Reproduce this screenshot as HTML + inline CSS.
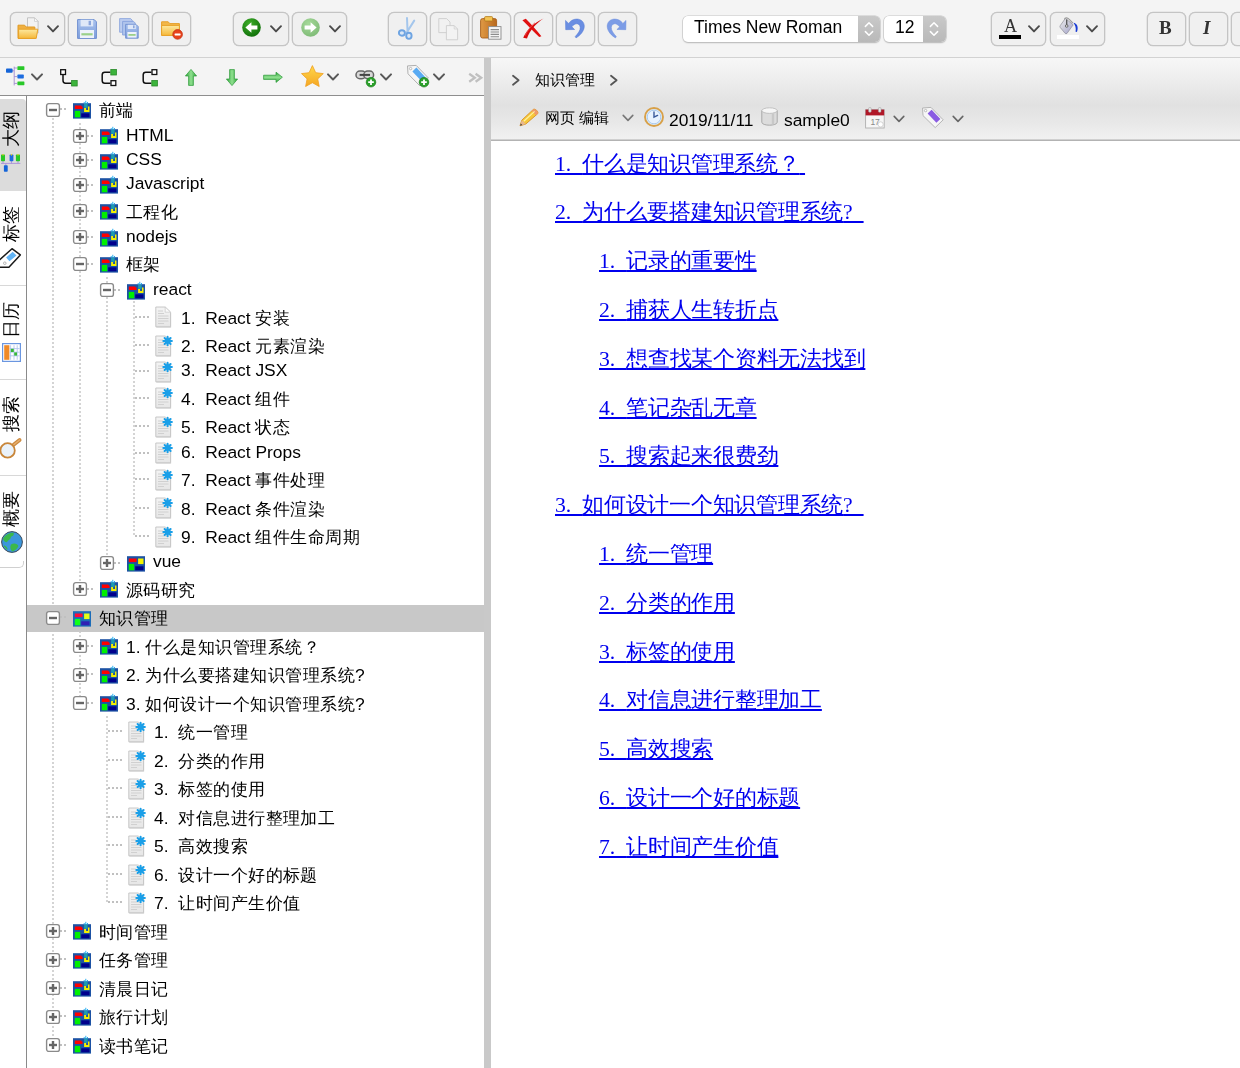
<!DOCTYPE html>
<html lang="zh">
<head>
<meta charset="utf-8">
<title>知识管理</title>
<style>
html,body{margin:0;padding:0}
html{overflow:hidden;width:1240px;height:1068px}
body{width:1240px;height:1068px;position:relative;overflow:hidden;background:#fff;font-family:"Liberation Sans",sans-serif;font-size:17px;color:#000}
svg{position:absolute;overflow:visible}
#tb1{position:absolute;overflow:hidden;left:0;top:0;width:1240px;height:57px;background:#f4f4f4;border-bottom:1px solid #d2d2d2}
.bt{position:absolute;top:12px;height:32px;box-sizing:content-box;border:1px solid #c4c4c4;border-radius:6px;background:#f0f0f0;box-shadow:0 0 0 0.300px #c4c4c4}
#tb2{position:absolute;z-index:2;left:0;top:58px;width:484px;height:37px;background:#f4f4f4;border-bottom:1px solid #8e8e8e}
#split{position:absolute;left:484px;top:58px;width:6.5px;height:1010px;background:#c9c9c9}
#tabs{position:absolute;left:0;top:95px;width:26px;height:973px;z-index:0;background:#fff;border-right:1px solid #8a8a8a}
#tabs .t{position:absolute;left:0;width:26px}
#tabs .on{background:#dcdcdc;border-radius:0 4px 0 0}
#tabs .sp{position:absolute;left:0;width:26px;height:1px;background:#d8d8d8}
#tabs .lb{position:absolute;left:0;width:26px;transform-origin:0 0;white-space:nowrap;font-size:16.5px;line-height:20px}
.vt{position:absolute;transform:rotate(-90deg);transform-origin:0 0;white-space:nowrap;font-size:17.800px;line-height:20px;height:20px}
#tree{position:absolute;left:27px;top:95px;width:457px;height:973px;background:#fff}
#treei{position:absolute;left:-27px;top:-95px;width:484px;height:1068px;overflow:hidden}
.vl{position:absolute;width:2px;background:repeating-linear-gradient(to bottom,#d4d4d4 0,#d4d4d4 2.300px,transparent 2.300px,transparent 4px)}
.hl{position:absolute;height:2px;background:repeating-linear-gradient(to right,#c0c0c0 0,#c0c0c0 2px,transparent 2px,transparent 4.100px)}
.sel{position:absolute;left:27px;width:457px;background:#c8c8c8}
.ex{width:14px;height:14px}
.ic{width:18px;height:22px}
.dc{width:18px;height:23px}
.tx{position:absolute;white-space:nowrap;font-size:17.400px;line-height:40px;height:40px}
#hd{position:absolute;left:490.500px;top:58px;width:749.500px;height:81px;background:linear-gradient(to bottom,#f7f7f7 0,#eeeeee 25%,#e1e1e1 58%,#e8e8e8 80%,#f1f1f1 100%);border-bottom:1px solid #d0d0d0;box-shadow:0 1px 0 #b3b3b3}
#ct{position:absolute;left:490.500px;top:141px;width:749.500px;height:927px;background:#fff}
.lk{position:absolute;white-space:nowrap;font-family:"Liberation Serif",serif;font-size:21.7px;line-height:40px;color:#0000ee;text-decoration:underline;text-decoration-thickness:1.6px;text-underline-offset:2px}
.h{position:absolute;white-space:nowrap}
.tx,.lk,.h,.vt{will-change:transform}
.tx .c{letter-spacing:0.470px}
.lk .c{letter-spacing:-0.250px}
</style>
</head>
<body>
<svg width="0" height="0" style="position:absolute">
<defs>
<linearGradient id="gfold" x1="0" y1="0" x2="0" y2="1"><stop offset="0" stop-color="#fde9a0"/><stop offset="1" stop-color="#f5b83a"/></linearGradient>
<linearGradient id="gdisk" x1="0" y1="0" x2="0" y2="1"><stop offset="0" stop-color="#a9c2ee"/><stop offset="1" stop-color="#7e9fdc"/></linearGradient>
<radialGradient id="ggreen" cx="0.4" cy="0.3" r="0.8"><stop offset="0" stop-color="#3fae2a"/><stop offset="1" stop-color="#0b6a06"/></radialGradient>
<radialGradient id="ggreen2" cx="0.4" cy="0.3" r="0.8"><stop offset="0" stop-color="#a6d99a"/><stop offset="1" stop-color="#7bb873"/></radialGradient>
<linearGradient id="gdoc" x1="0" y1="0" x2="0" y2="1"><stop offset="0" stop-color="#f4f4f4"/><stop offset="1" stop-color="#e6e6e6"/></linearGradient>
<linearGradient id="garr" x1="0" y1="0" x2="1" y2="0"><stop offset="0" stop-color="#2fa33a"/><stop offset="0.5" stop-color="#8fe08f"/><stop offset="1" stop-color="#2fa33a"/></linearGradient>
<linearGradient id="garrh" x1="0" y1="0" x2="0" y2="1"><stop offset="0" stop-color="#2fa33a"/><stop offset="0.5" stop-color="#8fe08f"/><stop offset="1" stop-color="#2fa33a"/></linearGradient>
<linearGradient id="gstar" x1="0" y1="0" x2="0" y2="1"><stop offset="0" stop-color="#ffd84a"/><stop offset="1" stop-color="#f5a623"/></linearGradient>
<linearGradient id="gbuck" x1="0" y1="0" x2="1" y2="1"><stop offset="0" stop-color="#f0f0f0"/><stop offset="0.500" stop-color="#c8c8d8"/><stop offset="1" stop-color="#a0a0d0"/></linearGradient>
<linearGradient id="gclip" x1="0" y1="0" x2="1" y2="0"><stop offset="0" stop-color="#e09a45"/><stop offset="1" stop-color="#b8681c"/></linearGradient>

<!-- expander minus / plus (14x14) -->
<g id="exm"><rect x="0.6" y="0.6" width="12.8" height="12.8" rx="2.2" fill="#fff" stroke="#8a8a8a" stroke-width="1.400"/><rect x="3" y="5.800" width="8" height="2.400" fill="#666"/></g>
<g id="exp"><rect x="0.6" y="0.6" width="12.8" height="12.8" rx="2.2" fill="#fff" stroke="#8a8a8a" stroke-width="1.400"/><rect x="3" y="5.800" width="8" height="2.400" fill="#666"/><rect x="5.800" y="3" width="2.400" height="8" fill="#666"/></g>

<!-- folder icon 18x22, body occupies y 3.5..18.5 -->
<g id="fp"><rect x="0" y="3.200" width="18" height="15.400" fill="#1c52a4"/><rect x="1.800" y="5.500" width="7.800" height="3.600" fill="#ff0000"/><rect x="1.800" y="10.900" width="5.400" height="6.400" fill="#00f000"/><rect x="8.200" y="13.300" width="8.300" height="4" fill="#00008c"/><rect x="11.100" y="5.500" width="5.400" height="5.600" fill="#f4f400"/></g>
<g id="fs"><rect x="0" y="3.200" width="18" height="15.400" fill="#1c6cb8"/><rect x="1.800" y="5.500" width="7.800" height="3.600" fill="#ff0838"/><rect x="1.800" y="10.900" width="5.400" height="6.400" fill="#10ff18"/><rect x="8.200" y="13.300" width="8.300" height="4" fill="#3020b4"/><rect x="11.100" y="5.500" width="5.400" height="5.600" fill="#e4ff18"/></g>
<g id="fo"><rect x="0" y="3.200" width="18" height="15.400" fill="#1c52a4"/><path d="M1.800 5.500h6.200l1.600 1.400v2.200h-7.800z" fill="#ff0000"/><rect x="1.800" y="10.900" width="5.400" height="6.400" fill="#00f000"/><rect x="8.200" y="13.300" width="8.300" height="4" fill="#00008c"/><path d="M11.100 7.900h2v2h1.900v-3.500h1.500v5.500h-5.400z" fill="#f4f000"/><rect x="11.100" y="3.500" width="3.500" height="4.400" fill="#1c9cb0"/><path d="M12.800 0.800v2.600M10.900 2l0.900 1.500M14.800 2l-0.900 1.500" stroke="#2aaef0" stroke-width="1" fill="none"/></g>

<!-- document icons 18x23 -->
<g id="dp"><path d="M1 1.4h9.2l5.6 5.4v14.4h-14.8z" fill="#cfcfcf" opacity="0.55" transform="translate(0.3,0.8)"/><path d="M0.8 1h9.4l5.4 5.2v14.6h-14.8z" fill="url(#gdoc)" stroke="#c2c2c2" stroke-width="0.9"/><path d="M10.2 1v5.2h5.4z" fill="#fafafa" stroke="#c8c8c8" stroke-width="0.7"/><path d="M3 5h5M3 7.5h6M3 10h10.5M3 12.5h10.5M3 15h10.5M3 17.5h6" stroke="#d0d0d0" stroke-width="1"/></g>
<g id="ds"><path d="M1 1.4h14.8v19.8h-14.8z" fill="#cfcfcf" opacity="0.55" transform="translate(0.3,0.8)"/><path d="M0.8 1h9.4l5.4 5.2v14.6h-14.8z" fill="url(#gdoc)" stroke="#c2c2c2" stroke-width="0.9"/><path d="M3 5h5M3 7.5h6M3 10h10.5M3 12.5h10.5M3 15h10.5M3 17.5h6" stroke="#d0d0d0" stroke-width="1"/><g stroke="#1a9fe8" stroke-width="2" stroke-linecap="round"><path d="M12.600 1.700v8.600M8.300 6h8.600M9.600 3l6 6M15.600 3l-6 6"/></g><circle cx="12.600" cy="6" r="2.700" fill="#1a9fe8"/></g>

<!-- chevron down, 11x7 centred on 0,0 -->
<path id="chv" d="M-5 -2.800L0 2.400L5 -2.800" fill="none" stroke="#4a4a4a" stroke-width="1.9" stroke-linecap="round" stroke-linejoin="round"/>
<path id="chs" d="M-5 -2.600L0 2.500L5 -2.600" fill="none" stroke="#585858" stroke-width="2" stroke-linecap="round" stroke-linejoin="round"/>
</defs>
</svg>

<!-- ================= top toolbar ================= -->
<div id="tb1">
<div class="bt" style="left:9.5px;width:53.5px"></div>
<div class="bt" style="left:68px;width:37px"></div>
<div class="bt" style="left:110px;width:37px"></div>
<div class="bt" style="left:152px;width:37px"></div>
<div class="bt" style="left:233px;width:53.5px"></div>
<div class="bt" style="left:291.5px;width:53.5px"></div>
<div class="bt" style="left:388px;width:37px"></div>
<div class="bt" style="left:430px;width:37px"></div>
<div class="bt" style="left:472px;width:37px"></div>
<div class="bt" style="left:514px;width:37px"></div>
<div class="bt" style="left:556px;width:37px"></div>
<div class="bt" style="left:598px;width:37px"></div>
<div class="bt" style="left:991px;width:53px"></div>
<div class="bt" style="left:1049.5px;width:53px"></div>
<div class="bt" style="left:1147px;width:37px"></div>
<div class="bt" style="left:1189px;width:37px"></div>
<div class="bt" style="left:1231px;width:37px"></div>
<!-- open folder + doc -->
<svg style="left:17px;top:17px" width="23" height="23" viewBox="0 0 23 23"><path d="M10.5 0.8h7l3.6 3.6v11.6h-10.6z" fill="#f3f3f3" stroke="#bdbdbd" stroke-width="0.9"/><path d="M17.5 0.8v3.6h3.6z" fill="#fff" stroke="#c4c4c4" stroke-width="0.7"/><path d="M1 8.2h6.6l1.6 1.8h8.6v11.4h-16.8z" fill="#f0b040" stroke="#e09a24" stroke-width="1"/><path d="M1.6 12.2h19.2l-1.6 9.2h-17.6z" fill="url(#gfold)" stroke="#e8a228" stroke-width="1"/></svg>
<svg style="left:52.7px;top:29.3px" width="1" height="1"><use href="#chv"/></svg>
<!-- save -->
<svg style="left:77px;top:19px" width="20" height="20" viewBox="0 0 20 20"><path d="M0.6 0.6h16.6l2.2 2.2v16.6h-18.8z" fill="url(#gdisk)" stroke="#6f8fd0" stroke-width="1"/><rect x="3.6" y="0.8" width="12.6" height="6.6" fill="#dfe8f8"/><rect x="11.6" y="1.8" width="2.4" height="4.4" fill="#8ba6dc"/><rect x="3" y="11" width="14" height="8" fill="#eef2fa"/><rect x="4.4" y="14.2" width="11.2" height="2.2" fill="#9bd08a"/></svg>
<!-- save all -->
<svg style="left:119px;top:18px" width="20" height="21" viewBox="0 0 20 21"><path d="M0.6 0.6h11l1.6 1.6v12h-12.6z" fill="#bccdf0" stroke="#8ea8de" stroke-width="0.9"/><path d="M3.6 3.4h11l1.6 1.6v12h-12.6z" fill="#b0c4ec" stroke="#86a2dc" stroke-width="0.9"/><path d="M6.6 6.4h10.4l2.2 2.2v11.6h-12.6z" fill="url(#gdisk)" stroke="#6f8fd0" stroke-width="0.9"/><rect x="8.8" y="6.8" width="8" height="4.2" fill="#dfe8f8"/><rect x="14" y="7.4" width="1.6" height="2.8" fill="#8ba6dc"/><rect x="8.4" y="14" width="9.2" height="5.6" fill="#eef2fa"/><rect x="9.4" y="16" width="7.2" height="1.8" fill="#9bd08a"/></svg>
<!-- folder remove -->
<svg style="left:161px;top:21px" width="22" height="19" viewBox="0 0 22 19"><path d="M0.6 0.8h6.6l1.6 1.8h9.6v11.6h-17.8z" fill="#f2b84a" stroke="#e6a02a" stroke-width="1"/><path d="M0.6 4.4h17.8v10h-17.8z" fill="url(#gfold)" stroke="#e8a228" stroke-width="1"/><circle cx="16.6" cy="13.4" r="4.8" fill="#e8421c" stroke="#c43010" stroke-width="0.8"/><rect x="13.6" y="12.4" width="6" height="2" rx="0.6" fill="#fff"/></svg>
<!-- back -->
<svg style="left:242px;top:18.3px" width="19" height="19" viewBox="0 0 19 19"><circle cx="9.5" cy="9.5" r="9.3" fill="url(#ggreen)"/><path d="M3.4 9.5l6-5.2v3.2h6v4h-6v3.2z" fill="#fff"/></svg>
<svg style="left:276.3px;top:29.3px" width="1" height="1"><use href="#chv"/></svg>
<!-- forward -->
<svg style="left:300.6px;top:18.3px" width="19" height="19" viewBox="0 0 19 19"><circle cx="9.5" cy="9.5" r="9.3" fill="url(#ggreen2)"/><path d="M15.6 9.5l-6-5.2v3.2h-6v4h6v3.2z" fill="#fff"/></svg>
<svg style="left:334.6px;top:29.3px" width="1" height="1"><use href="#chv"/></svg>
<!-- cut -->
<svg style="left:398px;top:17px" width="18" height="24" viewBox="0 0 18 24"><path d="M9 1L9.600 15.600M16.200 3.600L8.400 16" stroke="#a4c6ec" stroke-width="2" stroke-linecap="round" fill="none"/><ellipse cx="3.900" cy="16" rx="3" ry="2.700" fill="#dce8f6" stroke="#6ea4e2" stroke-width="1.900"/><ellipse cx="10.900" cy="18.800" rx="2.700" ry="3.100" fill="#dce8f6" stroke="#6ea4e2" stroke-width="1.900"/></svg>
<!-- copy (disabled) -->
<svg style="left:438px;top:18px" width="22" height="23" viewBox="0 0 22 23"><path d="M0.8 0.6h7.8l3.4 3.4v10.6h-11.2z" fill="#f1f1f1" stroke="#cdcdcd" stroke-width="0.9"/><path d="M8.4 7.6h7.8l3.4 3.4v10.8h-11.2z" fill="#f3f3f3" stroke="#cdcdcd" stroke-width="0.9"/><path d="M16.2 7.6v3.4h3.4" fill="none" stroke="#d2d2d2" stroke-width="0.8"/></svg>
<!-- paste -->
<svg style="left:480px;top:15.800px" width="22" height="24" viewBox="0 0 22 24"><rect x="0.6" y="2.6" width="16" height="19.4" rx="2" fill="url(#gclip)" stroke="#a85e18" stroke-width="0.9"/><rect x="4.6" y="0.6" width="8" height="4.4" rx="1" fill="#f4c454" stroke="#b07a1c" stroke-width="0.8"/><rect x="8.6" y="10.6" width="12.4" height="12.6" fill="#f4f4f4" stroke="#8a8a8a" stroke-width="0.9"/><path d="M10.6 13.6h8.4M10.6 16h8.4M10.6 18.4h8.4M10.6 20.8h8.4" stroke="#8c8c8c" stroke-width="1.1"/></svg>
<!-- delete -->
<svg style="left:522px;top:18px" width="22" height="21" viewBox="0 0 22 21"><path d="M0.400 2.200L3.800 0.800C8.800 5.800 14.800 12.400 19.400 18.200L17.200 19C12.400 14 6 8 0.400 2.200Z" fill="#e01010"/><path d="M21.600 0.600C14.400 5 7.400 13 5 20.600L1.200 19.800C4.400 12.400 12 4.600 21.600 0.600Z" fill="#d80c0c"/><path d="M3 17.800C5 13 9 8 13 4.800" stroke="#f04848" stroke-width="0.900" fill="none"/></svg>
<!-- undo -->
<svg style="left:564.500px;top:18px" width="21" height="22" viewBox="0 0 21 22"><path d="M0.500 2.400L3.600 5.400C6 2 10 0.600 13.400 1.200C17.600 2 19.800 5.600 19.200 9.400C18.600 13.600 15 17.600 11 19.900L10.200 18.600C13 15.400 15.400 12.400 15.200 9.400C15 6.600 12.800 5.400 11 5.800C9.400 6.200 8 7.400 6.800 8.800L9.600 11.500L0.700 11.700Z" fill="#6a8ee2" stroke="#5078d4" stroke-width="0.500"/></svg>
<!-- redo -->
<svg style="left:606px;top:18px" width="21" height="22" viewBox="0 0 21 22"><g transform="translate(20.500,0) scale(-1,1)"><path d="M0.500 2.400L3.600 5.400C6 2 10 0.600 13.400 1.200C17.600 2 19.800 5.600 19.200 9.400C18.600 13.600 15 17.600 11 19.900L10.200 18.600C13 15.400 15.400 12.400 15.200 9.400C15 6.600 12.800 5.400 11 5.800C9.400 6.200 8 7.400 6.800 8.800L9.600 11.500L0.700 11.700Z" fill="#7c9ce6" stroke="#6a8cdc" stroke-width="0.500"/></g></svg>
<!-- font combo -->
<div class="h" style="left:682.5px;top:15.5px;width:197px;height:26px;border-radius:5px;background:#fff;box-shadow:0 0 0 0.6px #c4c4c4,0 1px 1.5px rgba(0,0,0,.28)"></div>
<div class="h" style="left:858px;top:15.5px;width:21.5px;height:26px;border-radius:0 5px 5px 0;background:linear-gradient(#c9c9c9,#b9b9b9)"></div>
<svg style="left:868.7px;top:28.5px" width="1" height="1"><path d="M-3.6 -2.6L0 -6.2L3.6 -2.6M-3.6 2.6L0 6.2L3.6 2.6" fill="none" stroke="#fff" stroke-width="1.5" stroke-linecap="round" stroke-linejoin="round"/></svg>
<span class="h" style="left:694px;top:7px;font-size:17.500px;line-height:40px">Times New Roman</span>
<!-- size combo -->
<div class="h" style="left:884px;top:15.5px;width:61.5px;height:26px;border-radius:5px;background:#fff;box-shadow:0 0 0 0.6px #c4c4c4,0 1px 1.5px rgba(0,0,0,.28)"></div>
<div class="h" style="left:923px;top:15.5px;width:22.5px;height:26px;border-radius:0 5px 5px 0;background:linear-gradient(#c9c9c9,#b9b9b9)"></div>
<svg style="left:934.3px;top:28.5px" width="1" height="1"><path d="M-3.6 -2.6L0 -6.2L3.6 -2.6M-3.6 2.6L0 6.2L3.6 2.6" fill="none" stroke="#fff" stroke-width="1.5" stroke-linecap="round" stroke-linejoin="round"/></svg>
<span class="h" style="left:894.800px;top:7px;font-size:17.500px;line-height:40px">12</span>
<!-- font colour -->
<span class="h" style="left:1003.600px;top:5.600px;font-family:'Liberation Serif',serif;font-size:18.200px;line-height:40px;color:#333">A</span>
<div class="h" style="left:999px;top:35px;width:22px;height:4px;background:#000"></div>
<svg style="left:1033.7px;top:29.3px" width="1" height="1"><use href="#chv"/></svg>
<!-- fill colour -->
<svg style="left:1059px;top:17px" width="20" height="18" viewBox="0 0 20 18"><path d="M6.400 1.400L14.200 7.800L8 16.400Q7 17 6 16.200L1.200 10.400Q0.600 9.400 1.400 8.400Z" fill="url(#gbuck)" stroke="#8c8c98" stroke-width="0.700"/><path d="M5.400 2.400C6 0.200 8.600 0.600 10 2.200L13.800 6" fill="none" stroke="#9a9a9a" stroke-width="1.100"/><path d="M7.700 2.600v6" stroke="#555" stroke-width="1.300"/><circle cx="7.700" cy="9" r="1.300" fill="#ddd" stroke="#555" stroke-width="0.800"/><path d="M14.400 5.800C18 6.400 19.600 10 18.200 14.200C17.800 15.200 17 15.200 16.600 14.400C17.200 11 16.400 8.400 14.400 5.800Z" fill="#1a3cd4"/></svg>
<div class="h" style="left:1057px;top:35px;width:22px;height:4px;background:#fff"></div>
<svg style="left:1091.7px;top:29.3px" width="1" height="1"><use href="#chv"/></svg>
<!-- B I -->
<span class="h" style="left:1159px;top:8.200px;font-family:'Liberation Serif',serif;font-weight:bold;font-size:19px;line-height:40px;color:#333">B</span>
<span class="h" style="left:1203.400px;top:8.200px;font-family:'Liberation Serif',serif;font-weight:bold;font-style:italic;font-size:19px;line-height:40px;color:#333">I</span>

</div>

<!-- ================= left toolbar ================= -->
<div id="tb2">
<!-- tree icon (coords relative to tb2 top = 58) -->
<svg style="left:5.5px;top:8.3px" width="19" height="20" viewBox="0 0 19 20"><path d="M8.2 0.6v18.8M6 4.800h2.200M8.200 2h3M8.200 10.600h3M8.200 17.400h3" stroke="#a08ad0" stroke-width="0.9" fill="none"/><rect x="0" y="2.600" width="6.600" height="4.200" rx="0.800" fill="#1464d8"/><rect x="11.400" y="0.200" width="7" height="3.800" rx="0.600" fill="#28c828"/><rect x="11.400" y="8.600" width="6.400" height="3.800" rx="0.600" fill="#1c6ce0"/><rect x="11.400" y="15.400" width="7" height="3.800" rx="0.600" fill="#28c828"/></svg>
<svg style="left:36.6px;top:18.6px" width="1" height="1"><use href="#chs"/></svg>
<!-- icon 2 -->
<svg style="left:59.5px;top:11px" width="18" height="18" viewBox="0 0 18 18"><path d="M3 6v5.600q0 2.600 2.600 2.600h6" fill="none" stroke="#111" stroke-width="1.5"/><rect x="0.700" y="0.700" width="4.800" height="4.800" fill="#fff" stroke="#111" stroke-width="1.300"/><rect x="11.600" y="11.400" width="5.600" height="5.600" fill="#3cb43c" stroke="#2a8a2a" stroke-width="0.800"/></svg>
<!-- icon 3 -->
<svg style="left:101px;top:11px" width="16" height="18" viewBox="0 0 16 18"><path d="M9.400 3.200h-5.600q-2.600 0-2.600 2.600v5.600q0 2.800 2.600 2.800h5.600" fill="none" stroke="#111" stroke-width="1.500"/><rect x="9.800" y="0.400" width="5.600" height="5.600" fill="#3cb43c" stroke="#2a8a2a" stroke-width="0.800"/><rect x="10" y="11.700" width="4.800" height="4.800" fill="#fff" stroke="#111" stroke-width="1.300"/></svg>
<!-- icon 4 -->
<svg style="left:141.600px;top:11px" width="16" height="18" viewBox="0 0 16 18"><path d="M9.400 3.200h-5.600q-2.600 0-2.600 2.600v5.600q0 2.800 2.600 2.800h5.600" fill="none" stroke="#111" stroke-width="1.500"/><rect x="10" y="0.700" width="4.800" height="4.800" fill="#fff" stroke="#111" stroke-width="1.300"/><rect x="9.800" y="11.400" width="5.600" height="5.600" fill="#3cb43c" stroke="#2a8a2a" stroke-width="0.800"/></svg>
<!-- up -->
<svg style="left:185px;top:11px" width="12" height="17" viewBox="0 0 12 17"><path d="M6 0.400l5.600 6.600h-3.200v9.400h-4.800v-9.400h-3.200z" fill="url(#garr)" stroke="#2a9a36" stroke-width="0.700"/></svg>
<!-- down -->
<svg style="left:225.500px;top:11px" width="12" height="17" viewBox="0 0 12 17"><path d="M6 16.600l5.600-6.600h-3.200v-9.400h-4.800v9.400h-3.200z" fill="url(#garr)" stroke="#2a9a36" stroke-width="0.700"/></svg>
<!-- right -->
<svg style="left:263px;top:14px" width="20" height="11" viewBox="0 0 20 11"><path d="M19.400 5.200l-6.400-5v3h-12.400v4.200h12.400v3z" fill="url(#garrh)" stroke="#2a9a36" stroke-width="0.700"/></svg>
<!-- star -->
<svg style="left:300.500px;top:7.300px" width="23" height="22" viewBox="0 0 23 22"><path d="M11.400 0.600l3.300 7.100 7.600 0.900-5.600 5.300 1.500 7.600-6.800-3.800-6.800 3.800 1.500-7.600-5.600-5.300 7.600-0.900z" fill="url(#gstar)" stroke="#f0a020" stroke-width="0.800" stroke-linejoin="round"/></svg>
<svg style="left:333.400px;top:18.600px" width="1" height="1"><use href="#chs"/></svg>
<!-- link + -->
<svg style="left:354.500px;top:12px" width="21" height="18" viewBox="0 0 21 18"><rect x="1" y="1.100" width="9.800" height="7.600" rx="3.800" fill="#d8d8d8" stroke="#666" stroke-width="1.500"/><rect x="8.800" y="1.100" width="9.800" height="7.600" rx="3.800" fill="#d8d8d8" stroke="#666" stroke-width="1.500"/><rect x="4.600" y="3.900" width="10.400" height="2" fill="#444"/><circle cx="16" cy="12.200" r="4.800" fill="#2aa02a" stroke="#1c801c" stroke-width="0.700"/><path d="M16 9.400v5.600M13.200 12.200h5.600" stroke="#fff" stroke-width="1.800"/></svg>
<svg style="left:386.300px;top:18.600px" width="1" height="1"><use href="#chs"/></svg>
<!-- tag + -->
<svg style="left:406.500px;top:7px" width="23" height="22" viewBox="0 0 23 22"><path d="M0.500 0.900L9.200 0.400L21.400 13L13 21L1 8.800Z" fill="#f6f6f6" stroke="#b0b0b0" stroke-width="1" stroke-linejoin="round"/><path d="M5.400 6.400L9.400 2.600L18.400 12.200L14.400 16Z" fill="#58aaf2"/><circle cx="3.600" cy="3.600" r="1.200" fill="#fff" stroke="#999" stroke-width="0.600"/><circle cx="17" cy="17.200" r="4.800" fill="#2aa02a" stroke="#1c801c" stroke-width="0.700"/><path d="M17 14.400v5.600M14.200 17.200h5.600" stroke="#fff" stroke-width="1.800"/></svg>
<svg style="left:439.300px;top:18.600px" width="1" height="1"><use href="#chs"/></svg>
<!-- >> -->
<svg style="left:467.600px;top:15.200px" width="15" height="10" viewBox="0 0 15 10"><path d="M1.200 0.800l5.600 4-5.600 4M7.600 0.800l5.600 4-5.600 4" fill="none" stroke="#c0c0c0" stroke-width="2.300"/></svg>

</div>

<div id="split"></div>

<!-- ================= vertical tabs ================= -->
<div id="tabs">
<!-- coords relative to #tabs top = 95 -->
<div class="t on" style="top:4.300px;height:91.500px"></div>
<div class="sp" style="top:189.500px"></div>
<div class="sp" style="top:284px"></div>
<div class="sp" style="top:379.700px"></div>
<div class="t" style="top:471px;height:0;width:23px;border-bottom:1px solid #d0d0d0;border-right:1px solid #d0d0d0;border-radius:0 0 5px 0;height:6px;top:466px"></div>
<span class="vt" style="left:0.700px;top:52px">大纲</span>
<span class="vt" style="left:0.700px;top:147px">标签</span>
<span class="vt" style="left:0.700px;top:242.500px">日历</span>
<span class="vt" style="left:0.700px;top:337px">搜索</span>
<span class="vt" style="left:0.700px;top:431.500px">概要</span>
<!-- outline icon -->
<svg style="left:1.300px;top:59px" width="20" height="18" viewBox="0 0 20 18"><path d="M0 9.400h19.400M4.800 9.400v2.400M2 7v2.400M10.500 7v2.400M17 7v2.400" stroke="#a890d8" stroke-width="0.900" fill="none"/><rect x="0" y="0.500" width="4" height="6.700" rx="0.700" fill="#28c828"/><rect x="8.600" y="0.500" width="3.800" height="6.700" rx="0.700" fill="#1c6ce0"/><rect x="14.900" y="0.500" width="4.100" height="6.700" rx="0.700" fill="#28c828"/><rect x="2.900" y="11.300" width="3.800" height="6.500" rx="0.700" fill="#1464d8"/><path d="M2 0v1.400M10.500 0v1.400M17 0v1.400" stroke="#e8d020" stroke-width="1.200"/></svg>
<!-- tag icon -->
<svg style="left:0px;top:153.200px" width="22" height="21" viewBox="0 0 22 21"><path d="M-1 12.400L12 0.700L20.300 6.900L8.900 19.300L-1 19.300Z" fill="#fff" stroke="#1a1a1a" stroke-width="1.500" stroke-linejoin="round"/><path d="M6.100 9.500L12.700 3.800L16.500 7.600L9.500 13.300Z" fill="#62b4f6"/><circle cx="4.800" cy="15.200" r="1.300" fill="#fff" stroke="#999" stroke-width="0.700"/></svg>
<!-- calendar icon -->
<svg style="left:1.500px;top:248px" width="19" height="19" viewBox="0 0 19 19"><rect x="0.600" y="0.600" width="17.800" height="17.800" fill="#fff" stroke="#6a96e0" stroke-width="1.200"/><rect x="2.200" y="2.200" width="5.200" height="14.600" fill="#f08a28"/><path d="M8.600 2.200v14.600M12 2.200v14.600M15.200 2.200v14.600M7.600 5.600h10M7.600 9.200h10M7.600 12.800h10" stroke="#a8c0ea" stroke-width="0.800"/><rect x="8.800" y="5.800" width="3" height="3.200" fill="#38b838"/><rect x="12.200" y="9.400" width="2.800" height="3.200" fill="#38b838"/></svg>
<!-- search icon -->
<svg style="left:0px;top:343px" width="23" height="21" viewBox="0 0 23 21"><path d="M13.600 6.800l6-4.800" stroke="#cc8a40" stroke-width="3.800" stroke-linecap="round"/><path d="M13.600 6.800l6-4.800" stroke="#e8b070" stroke-width="1.400" stroke-linecap="round"/><circle cx="7.600" cy="12.400" r="7.200" fill="#eaf2fa" stroke="#c8863a" stroke-width="1.800"/></svg>
<!-- globe icon -->
<svg style="left:0.500px;top:436px" width="22" height="22" viewBox="0 0 22 22"><circle cx="11" cy="11" r="10.400" fill="#3c96dc" stroke="#3a4a5a" stroke-width="1"/><path d="M2 8c2-4 6-6.400 10.400-6.200 1.200 1.600-0.400 3.400-2.600 4 0.400 2.200-2 3-3.400 4.800-1 1.400-2.800 0.400-4.400-2.600z" fill="#3cb84a"/><path d="M10 13.400c2.600-1.800 6.600-1 7.400 1.600-0.800 2.600-3.600 4.800-6.400 5.400-1.600-2-2.400-4.800-1-7z" fill="#3cb84a"/><path d="M3 15c1.400 0.400 2.600 1.600 3 3.400" stroke="#3cb84a" stroke-width="1.600" fill="none"/></svg>

</div>

<!-- ================= tree ================= -->
<div id="tree"><div id="treei">
<i class="vl" style="left:79px;top:122.8px;height:466.2px"></i>
<i class="vl" style="left:106px;top:277.0px;height:285.6px"></i>
<i class="vl" style="left:133px;top:301.3px;height:234.9px"></i>
<i class="vl" style="left:79px;top:630.7px;height:72.2px"></i>
<i class="vl" style="left:106px;top:716.2px;height:186.2px"></i>
<i class="vl" style="left:52px;top:109.5px;height:935.5px"></i>
<i class="hl" style="left:60.0px;top:108px;width:7px"></i>
<svg class="ex" style="left:46.0px;top:102.5px"><use href="#exm"/></svg>
<svg class="ic" style="left:73.0px;top:99.9px"><use href="#fo"/></svg>
<span class="tx" style="left:99.0px;top:90px"><span class="c">前端</span></span>
<i class="hl" style="left:87.0px;top:135px;width:7px"></i>
<svg class="ex" style="left:73.0px;top:128.9px"><use href="#exp"/></svg>
<svg class="ic" style="left:100.0px;top:126.3px"><use href="#fo"/></svg>
<span class="tx" style="left:126.0px;top:115px">HTML</span>
<i class="hl" style="left:87.0px;top:159px;width:7px"></i>
<svg class="ex" style="left:73.0px;top:153.2px"><use href="#exp"/></svg>
<svg class="ic" style="left:100.0px;top:150.6px"><use href="#fo"/></svg>
<span class="tx" style="left:126.0px;top:139px">CSS</span>
<i class="hl" style="left:87.0px;top:184px;width:7px"></i>
<svg class="ex" style="left:73.0px;top:177.5px"><use href="#exp"/></svg>
<svg class="ic" style="left:100.0px;top:174.9px"><use href="#fo"/></svg>
<span class="tx" style="left:126.0px;top:163px">Javascript</span>
<i class="hl" style="left:87.0px;top:210px;width:7px"></i>
<svg class="ex" style="left:73.0px;top:203.9px"><use href="#exp"/></svg>
<svg class="ic" style="left:100.0px;top:201.3px"><use href="#fo"/></svg>
<span class="tx" style="left:126.0px;top:192px"><span class="c">工程化</span></span>
<i class="hl" style="left:87.0px;top:236px;width:7px"></i>
<svg class="ex" style="left:73.0px;top:230.3px"><use href="#exp"/></svg>
<svg class="ic" style="left:100.0px;top:227.7px"><use href="#fo"/></svg>
<span class="tx" style="left:126.0px;top:216px">nodejs</span>
<i class="hl" style="left:87.0px;top:263px;width:7px"></i>
<svg class="ex" style="left:73.0px;top:256.7px"><use href="#exm"/></svg>
<svg class="ic" style="left:100.0px;top:254.1px"><use href="#fo"/></svg>
<span class="tx" style="left:126.0px;top:244px"><span class="c">框架</span></span>
<i class="hl" style="left:114.0px;top:289px;width:7px"></i>
<svg class="ex" style="left:100.0px;top:283.1px"><use href="#exm"/></svg>
<svg class="ic" style="left:127.0px;top:280.5px"><use href="#fo"/></svg>
<span class="tx" style="left:153.0px;top:269px">react</span>
<i class="hl" style="left:135.0px;top:316px;width:14px"></i>
<svg class="dc" style="left:155.2px;top:306.1px"><use href="#dp"/></svg>
<span class="tx" style="left:181.0px;top:298px">1.&nbsp; React <span class="c">安装</span></span>
<i class="hl" style="left:135.0px;top:344px;width:14px"></i>
<svg class="dc" style="left:155.2px;top:334.6px"><use href="#ds"/></svg>
<span class="tx" style="left:181.0px;top:326px">2.&nbsp; React <span class="c">元素渲染</span></span>
<i class="hl" style="left:135.0px;top:370px;width:14px"></i>
<svg class="dc" style="left:155.2px;top:361.0px"><use href="#ds"/></svg>
<span class="tx" style="left:181.0px;top:350px">3.&nbsp; React JSX</span>
<i class="hl" style="left:135.0px;top:397px;width:14px"></i>
<svg class="dc" style="left:155.2px;top:387.4px"><use href="#ds"/></svg>
<span class="tx" style="left:181.0px;top:379px">4.&nbsp; React <span class="c">组件</span></span>
<i class="hl" style="left:135.0px;top:425px;width:14px"></i>
<svg class="dc" style="left:155.2px;top:415.9px"><use href="#ds"/></svg>
<span class="tx" style="left:181.0px;top:407px">5.&nbsp; React <span class="c">状态</span></span>
<i class="hl" style="left:135.0px;top:452px;width:14px"></i>
<svg class="dc" style="left:155.2px;top:442.3px"><use href="#ds"/></svg>
<span class="tx" style="left:181.0px;top:432px">6.&nbsp; React Props</span>
<i class="hl" style="left:135.0px;top:478px;width:14px"></i>
<svg class="dc" style="left:155.2px;top:468.7px"><use href="#ds"/></svg>
<span class="tx" style="left:181.0px;top:460px">7.&nbsp; React <span class="c">事件处理</span></span>
<i class="hl" style="left:135.0px;top:507px;width:14px"></i>
<svg class="dc" style="left:155.2px;top:497.2px"><use href="#ds"/></svg>
<span class="tx" style="left:181.0px;top:489px">8.&nbsp; React <span class="c">条件渲染</span></span>
<i class="hl" style="left:135.0px;top:535px;width:14px"></i>
<svg class="dc" style="left:155.2px;top:525.7px"><use href="#ds"/></svg>
<span class="tx" style="left:181.0px;top:517px">9.&nbsp; React <span class="c">组件生命周期</span></span>
<i class="hl" style="left:114.0px;top:562px;width:7px"></i>
<svg class="ex" style="left:100.0px;top:555.6px"><use href="#exp"/></svg>
<svg class="ic" style="left:127.0px;top:553.0px"><use href="#fp"/></svg>
<span class="tx" style="left:153.0px;top:541px">vue</span>
<i class="hl" style="left:87.0px;top:588px;width:7px"></i>
<svg class="ex" style="left:73.0px;top:582.0px"><use href="#exp"/></svg>
<svg class="ic" style="left:100.0px;top:579.4px"><use href="#fo"/></svg>
<span class="tx" style="left:126.0px;top:570px"><span class="c">源码研究</span></span>
<div class="sel" style="top:604.6px;height:27.9px"></div>
<i class="hl" style="left:60.0px;top:616px;width:7px"></i>
<svg class="ex" style="left:46.0px;top:610.5px"><use href="#exm"/></svg>
<svg class="ic" style="left:73.0px;top:607.9px"><use href="#fs"/></svg>
<span class="tx" style="left:99.0px;top:598px"><span class="c">知识管理</span></span>
<i class="hl" style="left:87.0px;top:645px;width:7px"></i>
<svg class="ex" style="left:73.0px;top:639.0px"><use href="#exp"/></svg>
<svg class="ic" style="left:100.0px;top:636.4px"><use href="#fo"/></svg>
<span class="tx" style="left:126.0px;top:627px">1. <span class="c">什么是知识管理系统？</span></span>
<i class="hl" style="left:87.0px;top:673px;width:7px"></i>
<svg class="ex" style="left:73.0px;top:667.5px"><use href="#exp"/></svg>
<svg class="ic" style="left:100.0px;top:664.9px"><use href="#fo"/></svg>
<span class="tx" style="left:126.0px;top:655px">2. <span class="c">为什么要搭建知识管理系统</span>?</span>
<i class="hl" style="left:87.0px;top:702px;width:7px"></i>
<svg class="ex" style="left:73.0px;top:696.0px"><use href="#exm"/></svg>
<svg class="ic" style="left:100.0px;top:693.4px"><use href="#fo"/></svg>
<span class="tx" style="left:126.0px;top:684px">3. <span class="c">如何设计一个知识管理系统</span>?</span>
<i class="hl" style="left:108.0px;top:730px;width:14px"></i>
<svg class="dc" style="left:128.2px;top:721.0px"><use href="#ds"/></svg>
<span class="tx" style="left:154.0px;top:712px">1.&nbsp; <span class="c">统一管理</span></span>
<i class="hl" style="left:108.0px;top:759px;width:14px"></i>
<svg class="dc" style="left:128.2px;top:749.5px"><use href="#ds"/></svg>
<span class="tx" style="left:154.0px;top:741px">2.&nbsp; <span class="c">分类的作用</span></span>
<i class="hl" style="left:108.0px;top:787px;width:14px"></i>
<svg class="dc" style="left:128.2px;top:778.0px"><use href="#ds"/></svg>
<span class="tx" style="left:154.0px;top:769px">3.&nbsp; <span class="c">标签的使用</span></span>
<i class="hl" style="left:108.0px;top:816px;width:14px"></i>
<svg class="dc" style="left:128.2px;top:806.5px"><use href="#ds"/></svg>
<span class="tx" style="left:154.0px;top:798px">4.&nbsp; <span class="c">对信息进行整理加工</span></span>
<i class="hl" style="left:108.0px;top:844px;width:14px"></i>
<svg class="dc" style="left:128.2px;top:835.0px"><use href="#ds"/></svg>
<span class="tx" style="left:154.0px;top:826px">5.&nbsp; <span class="c">高效搜索</span></span>
<i class="hl" style="left:108.0px;top:873px;width:14px"></i>
<svg class="dc" style="left:128.2px;top:863.5px"><use href="#ds"/></svg>
<span class="tx" style="left:154.0px;top:855px">6.&nbsp; <span class="c">设计一个好的标题</span></span>
<i class="hl" style="left:108.0px;top:901px;width:14px"></i>
<svg class="dc" style="left:128.2px;top:892.0px"><use href="#ds"/></svg>
<span class="tx" style="left:154.0px;top:883px">7.&nbsp; <span class="c">让时间产生价值</span></span>
<i class="hl" style="left:60.0px;top:930px;width:7px"></i>
<svg class="ex" style="left:46.0px;top:924.0px"><use href="#exp"/></svg>
<svg class="ic" style="left:73.0px;top:921.4px"><use href="#fo"/></svg>
<span class="tx" style="left:99.0px;top:912px"><span class="c">时间管理</span></span>
<i class="hl" style="left:60.0px;top:958px;width:7px"></i>
<svg class="ex" style="left:46.0px;top:952.5px"><use href="#exp"/></svg>
<svg class="ic" style="left:73.0px;top:949.9px"><use href="#fo"/></svg>
<span class="tx" style="left:99.0px;top:940px"><span class="c">任务管理</span></span>
<i class="hl" style="left:60.0px;top:987px;width:7px"></i>
<svg class="ex" style="left:46.0px;top:981.0px"><use href="#exp"/></svg>
<svg class="ic" style="left:73.0px;top:978.4px"><use href="#fo"/></svg>
<span class="tx" style="left:99.0px;top:969px"><span class="c">清晨日记</span></span>
<i class="hl" style="left:60.0px;top:1015px;width:7px"></i>
<svg class="ex" style="left:46.0px;top:1009.5px"><use href="#exp"/></svg>
<svg class="ic" style="left:73.0px;top:1006.9px"><use href="#fo"/></svg>
<span class="tx" style="left:99.0px;top:997px"><span class="c">旅行计划</span></span>
<i class="hl" style="left:60.0px;top:1044px;width:7px"></i>
<svg class="ex" style="left:46.0px;top:1038.0px"><use href="#exp"/></svg>
<svg class="ic" style="left:73.0px;top:1035.4px"><use href="#fo"/></svg>
<span class="tx" style="left:99.0px;top:1026px"><span class="c">读书笔记</span></span>
</div></div>

<!-- ================= right header ================= -->
<div id="hd">
<!-- coords relative to #hd: left 490.5, top 58 -->
<svg style="left:21.500px;top:16.800px" width="8" height="11" viewBox="0 0 8 11"><path d="M1 0.800l5.600 4.500-5.600 4.500" fill="none" stroke="#555" stroke-width="1.800" stroke-linecap="round" stroke-linejoin="round"/></svg>
<span class="h" style="left:44.500px;top:2px;font-size:14.700px;line-height:40px">知识管理</span>
<svg style="left:119px;top:16.800px" width="8" height="11" viewBox="0 0 8 11"><path d="M1 0.800l5.600 4.500-5.600 4.500" fill="none" stroke="#555" stroke-width="1.800" stroke-linecap="round" stroke-linejoin="round"/></svg>
<!-- pencil -->
<svg style="left:28.500px;top:50.400px" width="21" height="19" viewBox="0 0 21 19"><path d="M1 17.800l1.800-5.600 11.600-10.800c1.600-1.200 5.400 2.200 4.400 4.200l-12 10.400z" fill="#f6c83a" stroke="#d89020" stroke-width="0.900" stroke-linejoin="round"/><path d="M14.400 1.400c1.600-1.200 5.400 2.200 4.400 4.200l-1.800 1.600-4.400-4.200z" fill="#f09a6a"/><path d="M1 17.800l1.800-5.600 4 3.800z" fill="#e8b890"/><path d="M1 17.800l0.800-2.400 1.600 1.600z" fill="#444"/><path d="M4.800 13.200l10.800-9.800" stroke="#fff2a0" stroke-width="1.200"/></svg>
<span class="h" style="left:54.800px;top:39.800px;font-size:14.700px;line-height:40px">网页 编辑</span>
<svg style="left:137px;top:60.200px" width="1" height="1"><path d="M-4.800 -2.600L0 2.400L4.800 -2.600" fill="none" stroke="#777" stroke-width="1.600" stroke-linecap="round" stroke-linejoin="round"/></svg>
<!-- clock -->
<svg style="left:153px;top:48.800px" width="20" height="20" viewBox="0 0 20 20"><circle cx="10" cy="10" r="9" fill="#dcecfc" stroke="#d8a048" stroke-width="1.900"/><circle cx="10" cy="10" r="6.800" fill="#e8f2fe" stroke="#9cc0ea" stroke-width="0.800"/><path d="M10 5v5.200l3.600-1.800" fill="none" stroke="#3a5a9a" stroke-width="1.400" stroke-linecap="round"/></svg>
<span class="h" style="left:178.300px;top:41.900px;font-size:17.400px;line-height:40px">2019/11/11</span>
<!-- db -->
<svg style="left:270px;top:49px" width="17" height="19" viewBox="0 0 17 19"><path d="M0.800 3.600v11.600c0 4 15.400 4 15.400 0v-11.600z" fill="#dcdcdc" stroke="#a8a8a8" stroke-width="1"/><ellipse cx="8.500" cy="3.600" rx="7.700" ry="2.800" fill="#f6f6f6" stroke="#bcbcbc" stroke-width="0.900"/><path d="M12 6.400v11" stroke="#c8c8c8" stroke-width="2.400"/></svg>
<span class="h" style="left:293.700px;top:41.900px;font-size:17.400px;line-height:40px">sample0</span>
<!-- calendar -->
<svg style="left:374px;top:48.500px" width="20" height="22" viewBox="0 0 20 22"><rect x="0.600" y="2.600" width="18.600" height="18.400" fill="#f6f6f6" stroke="#b0b0b0" stroke-width="0.900"/><rect x="0.600" y="2.600" width="18.600" height="5.800" fill="#b01828"/><rect x="3.600" y="0.600" width="2.600" height="4.600" rx="0.800" fill="#e8e8e8" stroke="#999" stroke-width="0.500"/><rect x="13.400" y="0.600" width="2.600" height="4.600" rx="0.800" fill="#e8e8e8" stroke="#999" stroke-width="0.500"/><text x="5.400" y="17.600" font-family="Liberation Sans, sans-serif" font-size="8.500" fill="#888">17</text><circle cx="15.600" cy="17.400" r="2.600" fill="#fff" stroke="#bbb" stroke-width="0.600"/></svg>
<svg style="left:408.300px;top:60.600px" width="1" height="1"><path d="M-4.800 -2.600L0 2.400L4.800 -2.600" fill="none" stroke="#666" stroke-width="1.600" stroke-linecap="round" stroke-linejoin="round"/></svg>
<!-- tag -->
<svg style="left:431.500px;top:48.800px" width="22" height="21" viewBox="0 0 22 21"><path d="M0.500 1L9 0.400L21.200 12.800L13.200 20.600L1 8.600Z" fill="#f6f6f6" stroke="#b4b4b4" stroke-width="1" stroke-linejoin="round"/><path d="M5.600 6.600L9.600 2.800L18.400 12L14.400 15.800Z" fill="#8a5ce2"/><circle cx="3.600" cy="3.600" r="1.200" fill="#fff" stroke="#999" stroke-width="0.600"/></svg>
<svg style="left:467.800px;top:60.600px" width="1" height="1"><path d="M-4.800 -2.600L0 2.400L4.800 -2.600" fill="none" stroke="#666" stroke-width="1.600" stroke-linecap="round" stroke-linejoin="round"/></svg>

</div>
<div id="ct"></div>
<a class="lk" style="left:555px;top:143.6px">1.&nbsp; <span class="c">什么是知识管理系统？</span>&nbsp;</a>
<a class="lk" style="left:555px;top:192.4px">2.&nbsp; <span class="c">为什么要搭建知识管理系统</span>?&nbsp;&nbsp;</a>
<a class="lk" style="left:598.6px;top:241.2px">1.&nbsp; <span class="c">记录的重要性</span></a>
<a class="lk" style="left:598.6px;top:290.0px">2.&nbsp; <span class="c">捕获人生转折点</span></a>
<a class="lk" style="left:598.6px;top:338.8px">3.&nbsp; <span class="c">想查找某个资料无法找到</span></a>
<a class="lk" style="left:598.6px;top:387.6px">4.&nbsp; <span class="c">笔记杂乱无章</span></a>
<a class="lk" style="left:598.6px;top:436.3px">5.&nbsp; <span class="c">搜索起来很费劲</span></a>
<a class="lk" style="left:555px;top:485.1px">3.&nbsp; <span class="c">如何设计一个知识管理系统</span>?&nbsp;&nbsp;</a>
<a class="lk" style="left:598.6px;top:533.9px">1.&nbsp; <span class="c">统一管理</span></a>
<a class="lk" style="left:598.6px;top:582.7px">2.&nbsp; <span class="c">分类的作用</span></a>
<a class="lk" style="left:598.6px;top:631.5px">3.&nbsp; <span class="c">标签的使用</span></a>
<a class="lk" style="left:598.6px;top:680.3px">4.&nbsp; <span class="c">对信息进行整理加工</span></a>
<a class="lk" style="left:598.6px;top:729.1px">5.&nbsp; <span class="c">高效搜索</span></a>
<a class="lk" style="left:598.6px;top:777.9px">6.&nbsp; <span class="c">设计一个好的标题</span></a>
<a class="lk" style="left:598.6px;top:826.7px">7.&nbsp; <span class="c">让时间产生价值</span></a>
</body>
</html>
